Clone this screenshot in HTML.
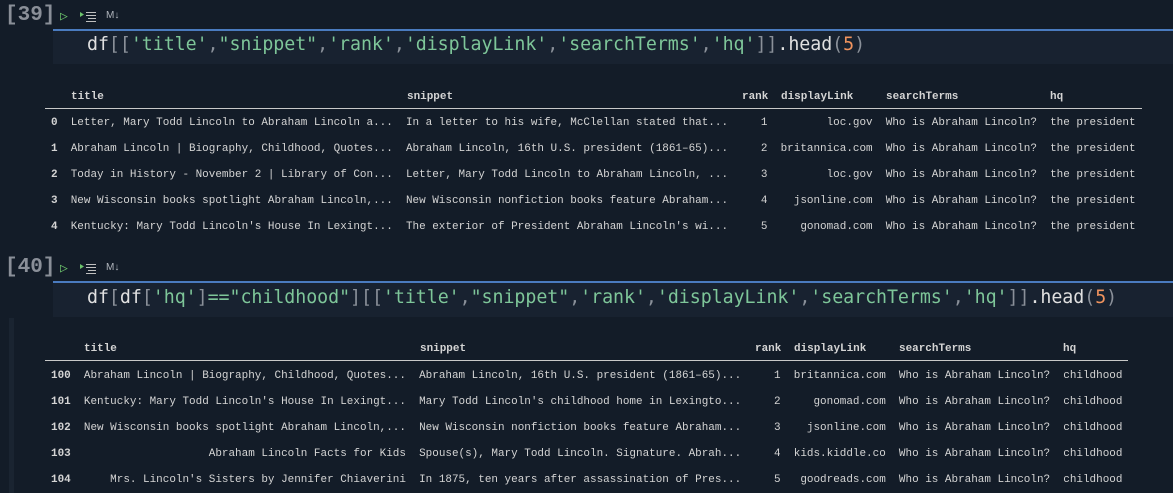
<!DOCTYPE html><html><head><style>
body{margin:0;width:1173px;height:493px;background:#131c28;overflow:hidden;position:relative;font-family:"Liberation Mono",monospace;color:#d4d4d4}
.a{position:absolute;white-space:pre}
.lbl{font-size:21px;color:#8a8f98;font-weight:bold}
.inp{position:absolute;left:53px;right:0;background:#182230;border-top:2px solid #4a7bbf}
.code{font-size:18.3px;color:#e0e0e0;font-family:"DejaVu Sans Mono",monospace;letter-spacing:-0.05px}
.g{color:#7ec699}.p{color:#8a9099}.o{color:#f0935e}
.t{font-size:10.96px;color:#d4d4d4}
.h{font-weight:bold}
.line{position:absolute;height:1px;background:#c8c8c8}
.tb{font-size:11px;color:#b0b5bc}
</style></head><body>
<div class="a lbl" style="left:5px;top:4px">[39]</div>
<div class="a" style="left:60px;top:9px;color:#6cc36c;font-size:13px">▷</div>
<svg class="a" style="left:80px;top:11px" width="18" height="12"><polygon points="0,1 4,3.5 0,6" fill="#6cc36c"/><path d="M6 1.5h10M6 4.5h10M8 7.5h8M6 10.5h10" stroke="#c0c0c0" stroke-width="1"/></svg>
<div class="a tb" style="left:106px;top:10px;font-family:'Liberation Sans',sans-serif;font-size:10px">M↓</div>
<div class="inp" style="top:29px;height:33px"></div>
<div class="a code" style="left:87px;top:34px">df<span class="p">[[</span><span class="g">'title'</span><span class="p">,</span><span class="g">"snippet"</span><span class="p">,</span><span class="g">'rank'</span><span class="p">,</span><span class="g">'displayLink'</span><span class="p">,</span><span class="g">'searchTerms'</span><span class="p">,</span><span class="g">'hq'</span><span class="p">]]</span>.head<span class="p">(</span><span class="o">5</span><span class="p">)</span></div>

<div class="a t h" style="left:71px;top:91px">title</div>
<div class="a t h" style="left:407px;top:91px">snippet</div>
<div class="a t h" style="left:742px;top:91px">rank</div>
<div class="a t h" style="left:781px;top:91px">displayLink</div>
<div class="a t h" style="left:886px;top:91px">searchTerms</div>
<div class="a t h" style="left:1050px;top:91px">hq</div>
<div class="line" style="left:45px;width:1097px;top:108px"></div>
<div class="a t" style="left:51px;top:110px;line-height:26px"><b>0</b>  Letter, Mary Todd Lincoln to Abraham Lincoln a...  In a letter to his wife, McClellan stated that...     1         loc.gov  Who is Abraham Lincoln?  the president
<b>1</b>  Abraham Lincoln | Biography, Childhood, Quotes...  Abraham Lincoln, 16th U.S. president (1861–65)...     2  britannica.com  Who is Abraham Lincoln?  the president
<b>2</b>  Today in History - November 2 | Library of Con...  Letter, Mary Todd Lincoln to Abraham Lincoln, ...     3         loc.gov  Who is Abraham Lincoln?  the president
<b>3</b>  New Wisconsin books spotlight Abraham Lincoln,...  New Wisconsin nonfiction books feature Abraham...     4    jsonline.com  Who is Abraham Lincoln?  the president
<b>4</b>  Kentucky: Mary Todd Lincoln's House In Lexingt...  The exterior of President Abraham Lincoln's wi...     5     gonomad.com  Who is Abraham Lincoln?  the president</div>

<div class="a lbl" style="left:5px;top:256px">[40]</div>
<div class="a" style="left:60px;top:261px;color:#6cc36c;font-size:13px">▷</div>
<svg class="a" style="left:80px;top:263px" width="18" height="12"><polygon points="0,1 4,3.5 0,6" fill="#6cc36c"/><path d="M6 1.5h10M6 4.5h10M8 7.5h8M6 10.5h10" stroke="#c0c0c0" stroke-width="1"/></svg>
<div class="a tb" style="left:106px;top:262px;font-family:'Liberation Sans',sans-serif;font-size:10px">M↓</div>
<div class="inp" style="top:281px;height:34px"></div>
<div class="a code" style="left:87px;top:287px">df<span class="p">[</span>df<span class="p">[</span><span class="g">'hq'</span><span class="p">]</span><span class="g">==</span><span class="g">"childhood"</span><span class="p">][[</span><span class="g">'title'</span><span class="p">,</span><span class="g">"snippet"</span><span class="p">,</span><span class="g">'rank'</span><span class="p">,</span><span class="g">'displayLink'</span><span class="p">,</span><span class="g">'searchTerms'</span><span class="p">,</span><span class="g">'hq'</span><span class="p">]]</span>.head<span class="p">(</span><span class="o">5</span><span class="p">)</span></div>
<div class="a" style="left:9px;top:318px;width:5px;height:175px;background:#1a2431"></div>

<div class="a t h" style="left:84px;top:343px">title</div>
<div class="a t h" style="left:420px;top:343px">snippet</div>
<div class="a t h" style="left:755px;top:343px">rank</div>
<div class="a t h" style="left:794px;top:343px">displayLink</div>
<div class="a t h" style="left:899px;top:343px">searchTerms</div>
<div class="a t h" style="left:1063px;top:343px">hq</div>
<div class="line" style="left:45px;width:1083px;top:360px"></div>
<div class="a t" style="left:51px;top:363px;line-height:26px"><b>100</b>  Abraham Lincoln | Biography, Childhood, Quotes...  Abraham Lincoln, 16th U.S. president (1861–65)...     1  britannica.com  Who is Abraham Lincoln?  childhood
<b>101</b>  Kentucky: Mary Todd Lincoln's House In Lexingt...  Mary Todd Lincoln's childhood home in Lexingto...     2     gonomad.com  Who is Abraham Lincoln?  childhood
<b>102</b>  New Wisconsin books spotlight Abraham Lincoln,...  New Wisconsin nonfiction books feature Abraham...     3    jsonline.com  Who is Abraham Lincoln?  childhood
<b>103</b>                     Abraham Lincoln Facts for Kids  Spouse(s), Mary Todd Lincoln. Signature. Abrah...     4  kids.kiddle.co  Who is Abraham Lincoln?  childhood
<b>104</b>      Mrs. Lincoln's Sisters by Jennifer Chiaverini  In 1875, ten years after assassination of Pres...     5   goodreads.com  Who is Abraham Lincoln?  childhood</div>
</body></html>
